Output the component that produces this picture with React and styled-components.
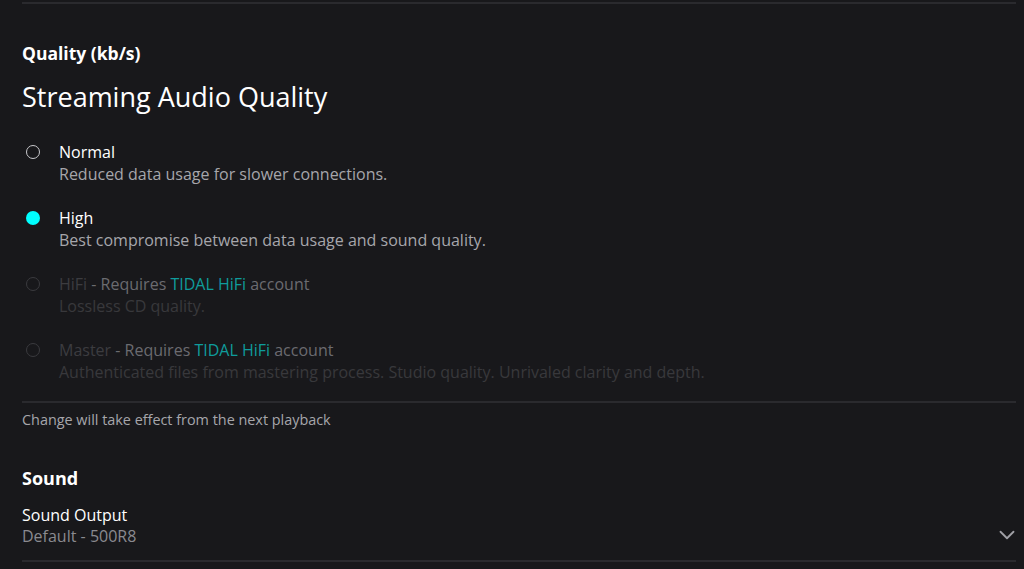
import styled, { createGlobalStyle } from "styled-components";
import { ChevronDown } from "lucide-react";

const GlobalStyle = createGlobalStyle`
  html, body {
    margin: 0;
    padding: 0;
    background: #18181b;
  }
  body {
    font-family: "Open Sans", Lato, sans-serif;
    color: #fff;
    -webkit-font-smoothing: antialiased;
  }
`;

const OPTIONS = [
  { id: "normal", name: "Normal", desc: "Reduced data usage for slower connections." },
  { id: "high", name: "High", desc: "Best compromise between data usage and sound quality.", checked: true },
  { id: "hifi", name: "HiFi", desc: "Lossless CD quality.", locked: true },
  {
    id: "master",
    name: "Master",
    desc: "Authenticated files from mastering process. Studio quality. Unrivaled clarity and depth.",
    locked: true,
  },
];

export default function App() {
  return (
    <>
      <GlobalStyle />
      <Page>
        <Divider />
        <Section>
          <SectionTitle>Quality (kb/s)</SectionTitle>
          <Heading>Streaming Audio Quality</Heading>
          <OptionList>
            {OPTIONS.map((o) => (
              <Option key={o.id}>
                <Radio $checked={o.checked} $locked={o.locked} />
                <OptionText>
                  <OptionName $locked={o.locked}>
                    {o.locked ? (
                      <>
                        <Dim>{o.name}</Dim> - Requires <Teal>TIDAL HiFi</Teal> account
                      </>
                    ) : (
                      o.name
                    )}
                  </OptionName>
                  <OptionDesc $locked={o.locked}>{o.desc}</OptionDesc>
                </OptionText>
              </Option>
            ))}
          </OptionList>
        </Section>
        <Divider />
        <Note>Change will take effect from the next playback</Note>
        <SoundTitle>Sound</SoundTitle>
        <SelectRow>
          <div>
            <SelectLabel>Sound Output</SelectLabel>
            <SelectValue>Default - 500R8</SelectValue>
          </div>
          <Chevron>
            <ChevronDown size={26} color="#a0a0a6" strokeWidth={1.7} />
          </Chevron>
        </SelectRow>
        <Divider />
      </Page>
    </>
  );
}

const Page = styled.div`
  padding: 2px 8px 0 22px;
  display: flex;
  flex-direction: column;
`;

const Divider = styled.div`
  height: 2px;
  background: #2a2a2e;
`;

const Section = styled.div`
  padding-top: 39px;
  padding-bottom: 18px;
`;

const SectionTitle = styled.h3`
  margin: 0;
  font-size: 17.5px;
  font-weight: 700;
  line-height: 20px;
`;

const Heading = styled.h2`
  margin: 18px 0 0;
  font-size: 27px;
  font-weight: 400;
  line-height: 32px;
`;

const OptionList = styled.div`
  margin-top: 28px;
  display: flex;
  flex-direction: column;
  gap: 22px;
`;

const Option = styled.div`
  display: flex;
  align-items: flex-start;
  gap: 19px;
  padding-left: 4px;
`;

const Radio = styled.span`
  flex: none;
  width: 14px;
  height: 14px;
  margin-top: 4px;
  border-radius: 50%;
  box-sizing: border-box;
  border: ${(p) => (p.$checked ? "none" : `1.5px solid ${p.$locked ? "#3a3a3e" : "#c8c8cc"}`)};
  background: ${(p) => (p.$checked ? "#00ffff" : "transparent")};
`;

const OptionText = styled.div`
  display: flex;
  flex-direction: column;
`;

const OptionName = styled.div`
  font-size: 16px;
  line-height: 22px;
  color: ${(p) => (p.$locked ? "#6b6b70" : "#ffffff")};
`;

const Dim = styled.span`
  color: #3c3c40;
`;

const Teal = styled.span`
  color: #0f9c9c;
`;

const OptionDesc = styled.div`
  font-size: 16px;
  line-height: 22px;
  color: ${(p) => (p.$locked ? "#38383c" : "#a6a6ab")};
`;

const Note = styled.div`
  margin-top: 7px;
  font-size: 14.4px;
  line-height: 20px;
  color: #a6a6ab;
`;

const SoundTitle = styled.h3`
  margin: 36px 0 0;
  font-size: 18px;
  font-weight: 700;
  line-height: 24px;
`;

const SelectRow = styled.div`
  margin-top: 15px;
  padding-bottom: 13px;
  display: flex;
  align-items: flex-end;
  justify-content: space-between;
`;

const SelectLabel = styled.div`
  font-size: 16px;
  line-height: 21px;
  color: #fff;
`;

const SelectValue = styled.div`
  font-size: 16px;
  line-height: 21px;
  color: #8a8a90;
`;

const Chevron = styled.span`
  display: flex;
  margin-right: -4px;
  margin-bottom: -1px;
`;
